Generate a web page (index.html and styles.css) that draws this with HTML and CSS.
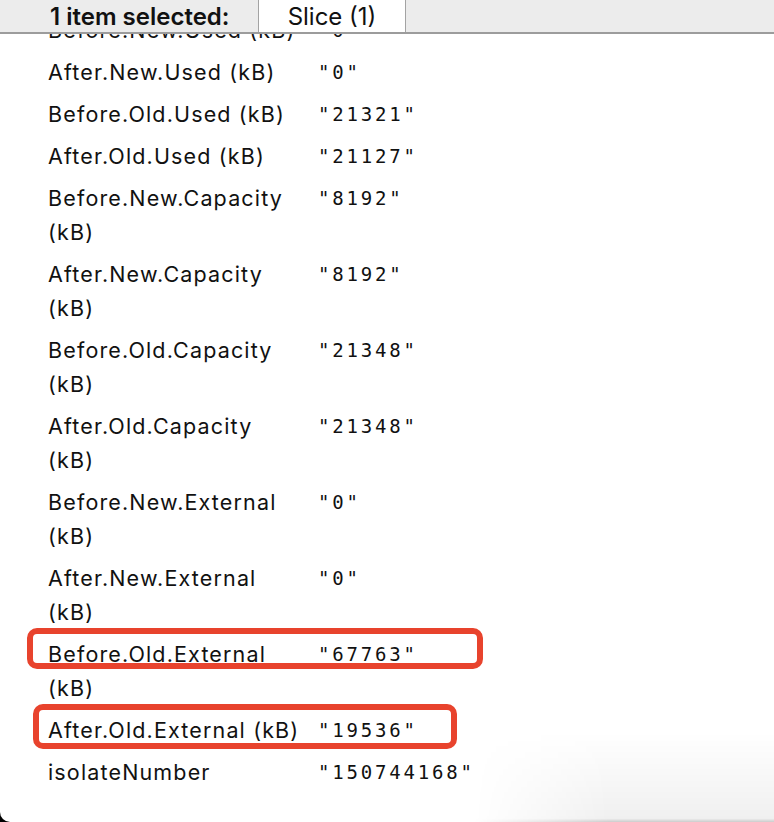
FILE: index.html
```html
<!DOCTYPE html>
<html lang="en">
<head>
<meta charset="utf-8">
<title>Slice (1)</title>
<link rel="stylesheet" href="styles.css">
</head>
<body>
<div class="frame">
  <div class="window">
    <div class="tabs">
      <div class="tab-label">1 item selected:</div>
      <div class="tab active">Slice (1)</div>
      <div class="tab-rest"></div>
    </div>
    <div class="viewport">
      <div class="props">
        <div class="key">Before.New.Used (kB)</div><div class="val">"0"</div>
        <div class="key">After.New.Used (kB)</div><div class="val">"0"</div>
        <div class="key">Before.Old.Used (kB)</div><div class="val">"21321"</div>
        <div class="key">After.Old.Used (kB)</div><div class="val">"21127"</div>
        <div class="key">Before.New.Capacity (kB)</div><div class="val">"8192"</div>
        <div class="key">After.New.Capacity (kB)</div><div class="val">"8192"</div>
        <div class="key">Before.Old.Capacity (kB)</div><div class="val">"21348"</div>
        <div class="key">After.Old.Capacity (kB)</div><div class="val">"21348"</div>
        <div class="key">Before.New.External (kB)</div><div class="val">"0"</div>
        <div class="key">After.New.External (kB)</div><div class="val">"0"</div>
        <div class="key">Before.Old.External (kB)</div><div class="val">"67763"</div>
        <div class="key">After.Old.External (kB)</div><div class="val">"19536"</div>
        <div class="key">isolateNumber</div><div class="val">"150744168"</div>
      </div>
    </div>
  </div>
  <div class="mark mark-before"></div>
  <div class="mark mark-after"></div>
</div>
</body>
</html>
```
FILE: styles.css
```css
html, body {
  margin: 0;
  padding: 0;
  background: #000;
}

.frame {
  position: relative;
  width: 774px;
  height: 822px;
  overflow: hidden;
  background: #000;
}

.window {
  position: relative;
  height: 100%;
  display: flex;
  flex-direction: column;
  background: #fff;
  border-bottom-left-radius: 10px;
  overflow: hidden;
}

.window::after {
  content: "";
  position: absolute;
  right: 0;
  bottom: 0;
  width: 300px;
  height: 90px;
  background: linear-gradient(180deg, rgba(0,0,0,0) 0%, rgba(0,0,0,0.06) 96%, rgba(0,0,0,0.2) 100%);
  -webkit-mask-image: linear-gradient(90deg, transparent 0%, #000 45%);
  mask-image: linear-gradient(90deg, transparent 0%, #000 45%);
  pointer-events: none;
}

.tabs {
  flex: none;
  display: flex;
  height: 32px;
  background: #ececec;
  border-bottom: 2px solid #9c9c9c;
  font-family: Inter, "Liberation Sans", sans-serif;
  font-size: 24px;
  color: #111;
}

.tab-label {
  width: 258px;
  box-sizing: border-box;
  padding-left: 50px;
  display: flex;
  align-items: center;
  font-weight: 600;
}

.tab {
  width: 146px;
  display: flex;
  align-items: center;
  justify-content: center;
  border-left: 1px solid #a3a3a3;
  border-right: 1px solid #a3a3a3;
}

.tab.active {
  background: #fff;
}

.tab-rest {
  flex: 1;
}

.viewport {
  flex: 1;
  overflow: hidden;
  position: relative;
}

.props {
  margin-top: -25px;
  padding-left: 48px;
  display: grid;
  grid-template-columns: 256px auto;
  column-gap: 14px;
  align-items: start;
}

.key {
  padding: 4px 0;
  font-family: Inter, "Liberation Sans", sans-serif;
  font-size: 21.5px;
  letter-spacing: 1.15px;
  line-height: 34px;
  color: #111;
}

.val {
  padding: 4px 0;
  font-family: "DejaVu Sans Mono", monospace;
  font-size: 19px;
  letter-spacing: 2.8px;
  line-height: 34px;
  color: #111;
  white-space: nowrap;
}

.mark {
  position: absolute;
  box-sizing: border-box;
  border: 6px solid #e8432d;
  border-radius: 10px;
}

.mark-before {
  left: 27px;
  top: 628px;
  width: 456px;
  height: 41px;
}

.mark-after {
  left: 33px;
  top: 704px;
  width: 424px;
  height: 45px;
}
```
